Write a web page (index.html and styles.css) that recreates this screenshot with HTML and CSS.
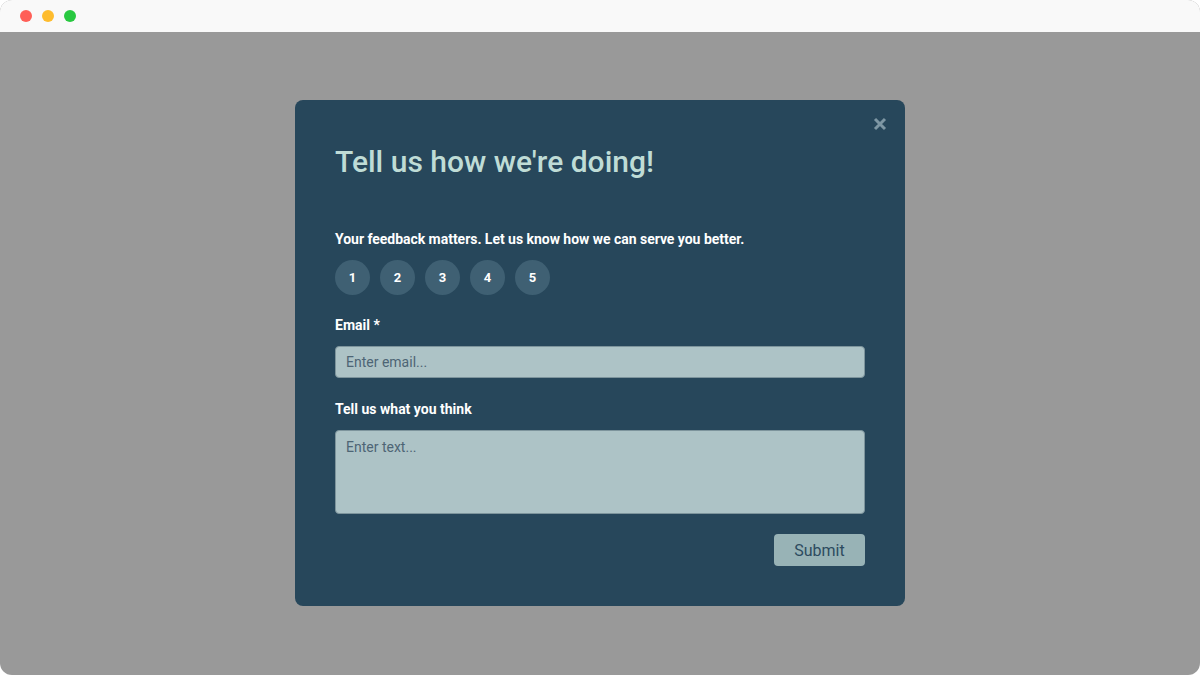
FILE: index.html
```html
<!DOCTYPE html>
<html lang="en">
<head>
    <meta charset="UTF-8">
    <meta name="viewport" content="width=device-width, initial-scale=1.0">
    <title>Feedback</title>
    <link rel="stylesheet" href="styles.css">
</head>
<body>
    <div class="window">
        <!-- browser bar -->
        <div class="titlebar">
            <span class="dot red"></span>
            <span class="dot yellow"></span>
            <span class="dot green"></span>
        </div>

        <!-- overlay with the modal -->
        <div class="overlay">
            <div class="modal">
                <button class="close" type="button" aria-label="Close">
                    <svg width="14" height="14" viewBox="0 0 14 14">
                        <path d="M2 2 L12 12 M12 2 L2 12" stroke="currentColor" stroke-width="3" stroke-linecap="butt"/>
                    </svg>
                </button>

                <h1 class="title">Tell us how we're doing!</h1>

                <p class="lead">Your feedback matters. Let us know how we can serve you better.</p>
                <div class="rating">
                    <button type="button">1</button>
                    <button type="button">2</button>
                    <button type="button">3</button>
                    <button type="button">4</button>
                    <button type="button">5</button>
                </div>

                <form class="form">
                    <label class="label" for="email">Email *</label>
                    <input type="text" id="email" class="field" placeholder="Enter email...">

                    <label class="label" for="text">Tell us what you think</label>
                    <textarea id="text" class="field area" placeholder="Enter text..."></textarea>

                    <div class="actions">
                        <button type="submit" class="submit">Submit</button>
                    </div>
                </form>
            </div>
        </div>
    </div>
</body>
</html>
```

FILE: styles.css
```css
html, body {
    margin: 0;
    padding: 0;
    height: 100%;
    background-color: #ffffff;
    font-family: Roboto, "Liberation Sans", Arial, sans-serif;
}

.window {
    height: 100%;
    border-radius: 12px;
    overflow: hidden;
    display: flex;
    flex-direction: column;
    background-color: #999999;
}

.titlebar {
    height: 32px;
    flex-shrink: 0;
    background-color: #f9f9f9;
    display: flex;
    align-items: center;
    gap: 10px;
    padding-left: 20px;
}

.dot {
    width: 12px;
    height: 12px;
    border-radius: 50%;
}

.red { background-color: #ff5f57; }
.yellow { background-color: #febc2e; }
.green { background-color: #28c840; }

.overlay {
    flex: 1;
    display: flex;
    justify-content: center;
    align-items: flex-start;
    padding-top: 68px;
}

/* modal */
.modal {
    position: relative;
    width: 610px;
    height: 506px;
    box-sizing: border-box;
    padding: 40px 40px;
    background-color: #27475b;
    border-radius: 8px;
}

.close {
    position: absolute;
    top: 17px;
    right: 18px;
    padding: 0;
    border: none;
    background: none;
    color: #7e97a4;
    cursor: pointer;
    display: flex;
}

.title {
    margin: 4px 0 0;
    font-size: 30px;
    font-weight: 500;
    line-height: 36px;
    color: #bfdcd6;
}

.lead {
    margin: 50px 0 0;
    font-size: 14px;
    font-weight: 700;
    line-height: 18px;
    letter-spacing: -0.03px;
    color: #ffffff;
}

.rating {
    display: flex;
    gap: 10px;
    margin-top: 12px;
}

.rating button {
    width: 35px;
    height: 35px;
    border-radius: 50%;
    border: none;
    padding: 0;
    background-color: #3f6073;
    color: #ffffff;
    font-family: inherit;
    font-size: 13px;
    font-weight: 700;
    cursor: pointer;
}

/* form */
.form {
    display: flex;
    flex-direction: column;
    margin-top: 21px;
}

.label {
    font-size: 14px;
    font-weight: 700;
    line-height: 18px;
    color: #ffffff;
}

.field {
    margin: 12px 0 22px;
    height: 32px;
    box-sizing: border-box;
    padding: 0 10px;
    border: 1px solid #7d949c;
    border-radius: 4px;
    background-color: #adc3c6;
    color: #27475b;
    font-family: inherit;
    font-size: 14px;
}

.field::placeholder {
    color: #4d6575;
}

.area {
    height: 84px;
    padding: 8px 10px;
    resize: none;
    margin-bottom: 20px;
}

.actions {
    display: flex;
    justify-content: flex-end;
}

.submit {
    width: 91px;
    height: 32px;
    border: none;
    border-radius: 4px;
    background-color: #98b3b6;
    color: #2d4b5f;
    font-family: inherit;
    font-size: 16px;
    cursor: pointer;
}
```
